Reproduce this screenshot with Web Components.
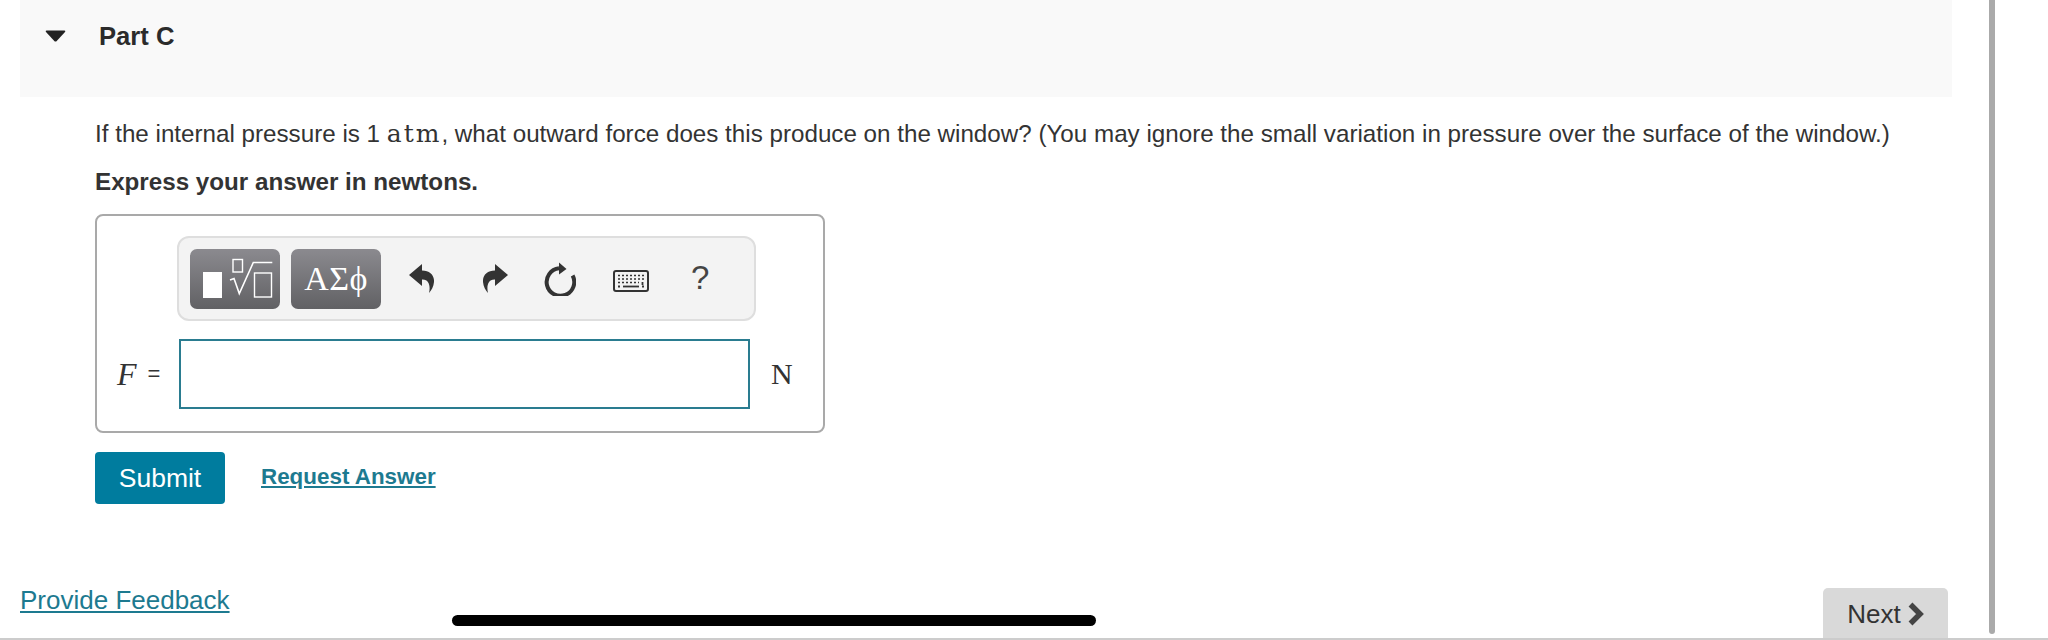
<!DOCTYPE html>
<html>
<head>
<meta charset="utf-8">
<style>
    html, body { margin: 0; padding: 0; background: #fff; }
    body { font-family: "Liberation Sans", Arial, sans-serif; color: #333; overflow: hidden; }
</style>
</head>
<body>
<part-page>
    <part-header slot="header">Part C</part-header>
    <p slot="question">If the internal pressure is 1 <math-text>atm</math-text>, what outward force does this produce on the window? (You may ignore the small variation in pressure over the surface of the window.)</p>
    <span slot="hint">Express your answer in newtons.</span>
    <answer-box slot="answer" label="F" unit="N"></answer-box>
    <submit-row slot="actions"></submit-row>
    <page-footer slot="footer"></page-footer>
</part-page>

<script>
class PartPage extends HTMLElement {
    constructor() {
        super();
        this.attachShadow({mode: 'open'}).innerHTML = `
        <style>
            :host { display: block; position: relative; width: 2048px; height: 640px; overflow: hidden; box-sizing: border-box; border-bottom: 2px solid #ccc; }
            .wrap { display: flex; flex-direction: column; height: 100%; }
            .body { padding: 0 0 0 95px; display: flex; flex-direction: column; }
            .question { height: 46px; margin-top: 13px; display: flex; align-items: center; font-size: 24.2px; color: #333; }
            ::slotted(p) { margin: 0; white-space: nowrap; }
            .hint { font-size: 24.2px; font-weight: bold; color: #333; margin-top: 9px; height: 34px; line-height: 34px; }
            .answer { margin-top: 15px; }
            .actions { margin-top: 19px; }
            .foot { margin-top: auto; }
            .scrollbar { position: absolute; left: 1989px; top: 0; width: 6px; height: 634px; background: #aaa; border-radius: 0 0 3px 3px; }
            .home { position: absolute; left: 452px; top: 615px; width: 644px; height: 11px; background: #000; border-radius: 6px; }
        </style>
        <div class="wrap">
            <slot name="header"></slot>
            <div class="body">
                <div class="question"><slot name="question"></slot></div>
                <div class="hint"><slot name="hint"></slot></div>
                <div class="answer"><slot name="answer"></slot></div>
                <div class="actions"><slot name="actions"></slot></div>
            </div>
            <div class="foot"><slot name="footer"></slot></div>
        </div>
        <div class="scrollbar"></div>
        <div class="home"></div>
        `;
    }
}

class PartHeader extends HTMLElement {
    constructor() {
        super();
        this.attachShadow({mode: 'open'}).innerHTML = `
        <style>
            :host { display: block; margin-left: 20px; width: 1932px; height: 97px; background: #f9f9f9; box-sizing: border-box; padding: 18px 0 0 25px; }
            .row { display: flex; align-items: center; height: 36px; }
            svg { width: 21px; height: 12px; margin-right: 33px; margin-top: -1px; }
            .title { font-size: 25.6px; font-weight: bold; color: #2b2b2b; }
        </style>
        <div class="row">
            <svg viewBox="0 0 21 12"><path d="M1.5 0.5 H19.5 Q21 0.5 20 2 L11.5 11.2 Q10.5 12 9.5 11.2 L1 2 Q0 0.5 1.5 0.5 Z" fill="#222"/></svg>
            <span class="title"><slot></slot></span>
        </div>
        `;
    }
}

class MathText extends HTMLElement {
    constructor() {
        super();
        // no whitespace round the slot, it would show up before the comma
        this.attachShadow({mode: 'open'}).innerHTML = `<style>
            :host { display: inline; font-family: "DejaVu Serif", "Liberation Serif", serif; font-size: 25px; letter-spacing: 2px; color: #333; }
        </style><slot></slot>`;
    }
}

class MathToolbar extends HTMLElement {
    constructor() {
        super();
        this.attachShadow({mode: 'open'}).innerHTML = `
        <style>
            :host { display: flex; align-items: center; width: 579px; height: 85px; box-sizing: border-box; background: #f3f3f3; border: 2px solid #dedede; border-radius: 12px; padding: 0 0 0 11px; }
            .tpl { width: 90px; height: 60px; border-radius: 7px; background: linear-gradient(#8b8a8f, #616164); display: flex; align-items: center; justify-content: center; flex: none; }
            .tpl + .tpl { margin-left: 11px; }
            .tpl svg { display: block; }
            .greek { color: #fff; font-family: "Liberation Serif", "Times New Roman", serif; font-size: 34px; letter-spacing: 0.5px; }
            svg.ic { flex: none; display: block; }
            .undo { margin-left: 28px; }
            .redo { margin-left: 49px; }
            .reload { margin-left: 36px; margin-top: 1px; }
            .keys { margin-left: 37px; margin-top: 5px; }
            .help { margin-left: 42px; font-size: 33px; color: #444; line-height: 1; margin-top: -2px; }
        </style>
        <div class="tpl">
            <svg width="90" height="60" viewBox="0 0 90 60" fill="none" stroke="#fff">
                <rect x="13" y="23" width="19" height="26" fill="#fff" stroke="none"/>
                <rect x="43" y="10.5" width="9.5" height="12.5" stroke-width="1.4"/>
                <path d="M40 31 L44 29.5 L49.3 44.5 L63.3 13.5 H82.3" stroke-width="1.6"/>
                <rect x="64.5" y="24" width="17" height="24" stroke-width="1.4"/>
            </svg>
        </div>
        <div class="tpl"><span class="greek">ΑΣϕ</span></div>
        <svg class="ic undo" width="25" height="29" viewBox="0 0 25 29"><path d="M0 11 L13 0 V6.5 C21 6.5 25.5 11.5 25 18 C24.6 22.5 22.5 26.5 20 29 C21.5 23 20.5 15 13 15.5 V22 Z" fill="#333"/></svg>
        <svg class="ic redo" width="25" height="29" viewBox="0 0 25 29"><path d="M25 11 L12 0 V6.5 C4 6.5 -0.5 11.5 0 18 C0.4 22.5 2.5 26.5 5 29 C3.5 23 4.5 15 12 15.5 V22 Z" fill="#333"/></svg>
        <svg class="ic reload" width="32" height="34" viewBox="0 0 32 34" fill="none"><path d="M28.6 13.5 A13.8 13.8 0 1 1 15 6.3" stroke="#333" stroke-width="4"/><path d="M15 0.5 L22.5 7 L15 12.5 Z" fill="#333"/></svg>
        <svg class="ic keys" width="36" height="22" viewBox="0 0 36 22">
            <rect x="1" y="1" width="34" height="20" rx="2" fill="#f3f3f3" stroke="#333" stroke-width="2"/>
            <path d="M5 5.5 H31 M5 9 H31 M5 12.5 H26" stroke="#333" stroke-width="1.6" stroke-dasharray="2 2" fill="none"/>
            <path d="M10 16.5 H26" stroke="#333" stroke-width="1.8" fill="none"/>
            <path d="M5 16.5 H7 M29 16.5 H31 M29.5 12 V15" stroke="#333" stroke-width="1.8" fill="none"/>
        </svg>
        <span class="help">?</span>
        `;
    }
}

class AnswerBox extends HTMLElement {
    constructor() {
        super();
        const label = this.getAttribute('label');
        const unit = this.getAttribute('unit');
        this.attachShadow({mode: 'open'}).innerHTML = `
        <style>
            :host { display: block; width: 730px; height: 219px; box-sizing: border-box; border: 2px solid #a9a9a9; border-radius: 8px; padding: 20px 0 0 0; background: #fff; }
            .bar { margin-left: 80px; }
            .row { display: flex; align-items: center; margin-top: 18px; }
            .label { width: 81px; box-sizing: border-box; padding-left: 20px; display: flex; align-items: center; white-space: nowrap; color: #333; }
            .label i { font-family: "Liberation Serif", "Times New Roman", serif; font-size: 32px; }
            .label span { font-size: 22px; margin-left: 11px; }
            input { width: 571px; height: 70px; box-sizing: border-box; border: 2px solid #2a7c90; background: #fff; outline: none; margin: 0 0 0 1px; padding: 0 8px; }
            .unit { margin-left: 21px; font-family: "Liberation Serif", "Times New Roman", serif; font-size: 30px; color: #333; }
        </style>
        <math-toolbar class="bar"></math-toolbar>
        <div class="row">
            <div class="label"><i>${label}</i><span>=</span></div>
            <input type="text">
            <span class="unit">${unit}</span>
        </div>
        `;
    }
}

class SubmitRow extends HTMLElement {
    constructor() {
        super();
        this.attachShadow({mode: 'open'}).innerHTML = `
        <style>
            :host { display: flex; align-items: center; }
            button { width: 130px; height: 52px; border: 0; border-radius: 4px; background: #007c9e; color: #fff; font: 26.5px "Liberation Sans", Arial, sans-serif; padding: 0; }
            a { margin-left: 36px; margin-top: -3px; color: #1d7a90; font-size: 22.4px; font-weight: bold; text-decoration: underline; }
        </style>
        <button>Submit</button>
        <a href="#">Request Answer</a>
        `;
    }
}

class PageFooter extends HTMLElement {
    constructor() {
        super();
        this.attachShadow({mode: 'open'}).innerHTML = `
        <style>
            :host { display: flex; justify-content: space-between; align-items: flex-start; padding: 0 100px 0 20px; height: 50px; }
            a { color: #1d7a90; font-size: 26px; text-decoration: underline; margin-top: -3px; }
            button { width: 125px; height: 50px; margin-top: 0; border: 0; border-radius: 5px 5px 0 0; background: #d9d9d9; color: #333; font: 26px "Liberation Sans", Arial, sans-serif; padding: 2px 0 0; display: flex; align-items: center; justify-content: center; gap: 6px; }
            svg { display: block; }
        </style>
        <a href="#">Provide Feedback</a>
        <button>Next <svg width="17" height="24" viewBox="0 0 17 24"><path d="M3.5 2.5 L13 12 L3.5 21.5" fill="none" stroke="#444" stroke-width="5.5"/></svg></button>
        `;
    }
}

customElements.define('part-page', PartPage);
customElements.define('part-header', PartHeader);
customElements.define('math-text', MathText);
customElements.define('math-toolbar', MathToolbar);
customElements.define('answer-box', AnswerBox);
customElements.define('submit-row', SubmitRow);
customElements.define('page-footer', PageFooter);
</script>
</body>
</html>
